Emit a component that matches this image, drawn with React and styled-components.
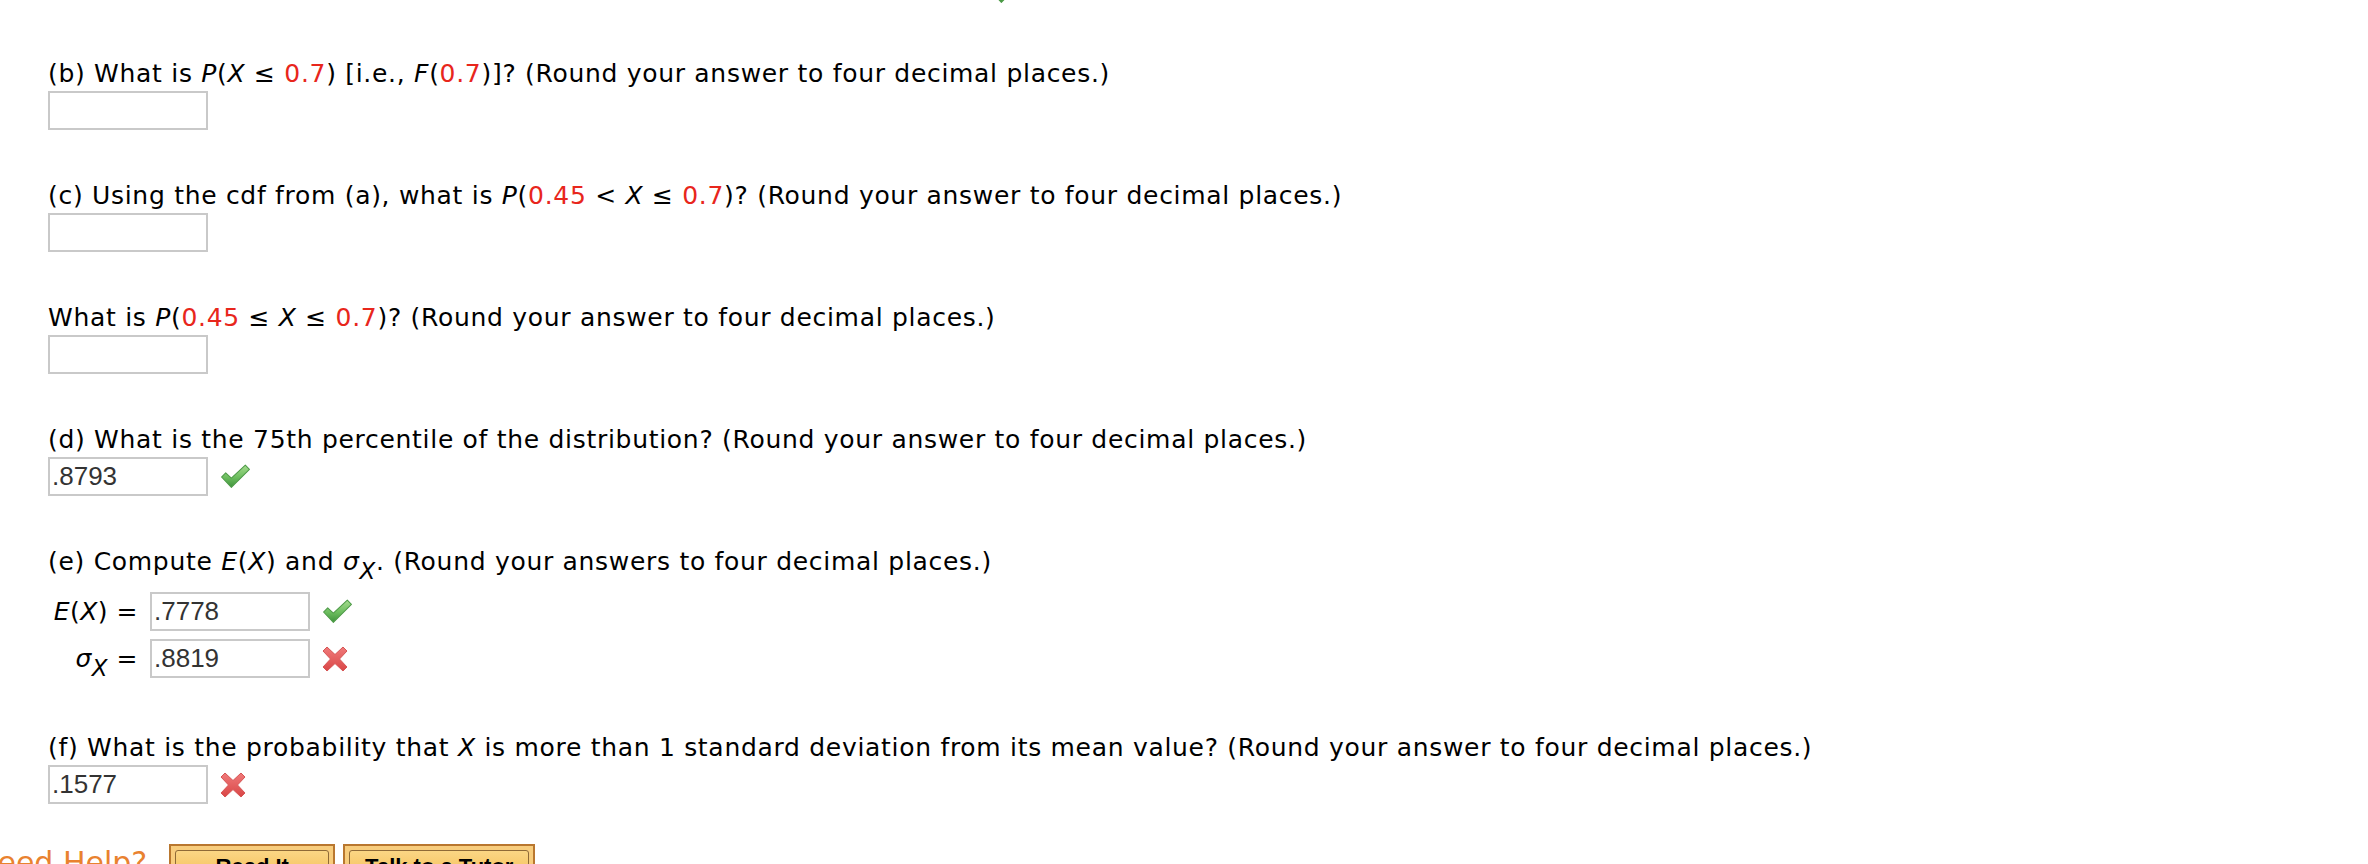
import React from "react";
import styled, { createGlobalStyle } from "styled-components";

const GlobalStyle = createGlobalStyle`
  html, body { margin: 0; padding: 0; background: #ffffff; }
  body { font-family: "DejaVu Sans", Verdana, sans-serif; color: #000; overflow: hidden; }
`;

const Page = styled.div`
  width: 2368px;
  height: 864px;
  overflow: hidden;
  padding-left: 48px;
  box-sizing: border-box;
`;

const PrevStub = styled.div`
  height: 4px;
  overflow: hidden;
  display: flex;
  align-items: flex-end;
  padding-left: 942px;
`;

const Part = styled.section`
  display: flex;
  flex-direction: column;
  gap: 2px;
  margin-top: ${(p) => p.$top}px;
`;

const Question = styled.p`
  margin: 0;
  font-size: 25px;
  letter-spacing: 0.7px;
  line-height: 30px;
  white-space: nowrap;
`;

const Red = styled.span`
  color: #e8261c;
`;

const Sub = styled.sub`
  font-size: 0.92em;
  vertical-align: -0.4em;
  line-height: 0;
`;

const AnswerRow = styled.div`
  display: flex;
  align-items: center;
  gap: 12px;
`;

const Stack = styled.div`
  display: flex;
  flex-direction: column;
  gap: 8px;
  margin-top: 13px;
`;

const Label = styled.span`
  width: 90px;
  text-align: right;
  font-size: 25px;
  letter-spacing: 0.5px;
  line-height: 30px;
  white-space: nowrap;
`;

const Field = styled.input`
  width: 160px;
  height: 39px;
  box-sizing: border-box;
  border: 2px solid #c9c9c9;
  padding: 0 0 0 2px;
  margin: 0;
  font-family: "Liberation Sans", Arial, sans-serif;
  font-size: 26px;
  color: #333;
  background: #fff;
  outline: none;
`;

const HelpRow = styled.div`
  display: flex;
  align-items: flex-start;
  gap: 8px;
  margin-top: 40px;
  margin-left: -73px;
`;

const HelpText = styled.span`
  font-size: 30px;
  line-height: 34px;
  color: #e9822f;
  margin-right: 14px;
  margin-top: 2px;
  white-space: nowrap;
`;

const Button = styled.div`
  width: ${(p) => p.$w}px;
  box-sizing: border-box;
  border: 2px solid #b9772f;
  background: #f8cd7d;
  padding: 4px;
`;

const ButtonFace = styled.div`
  border: 1px solid #8f6a36;
  border-radius: 3px;
  background: linear-gradient(#fbd684, #f2b84c);
  font-family: "Liberation Sans", Arial, sans-serif;
  font-weight: bold;
  font-size: 22px;
  line-height: 26px;
  padding: 3px 0 6px;
  text-align: center;
  color: #000;
`;

const Check = () => (
  <svg width="31" height="25" viewBox="0 0 30 24">
    <defs>
      <linearGradient id="cg" x1="0" y1="0" x2="0" y2="1">
        <stop offset="0" stopColor="#a6dc8f" />
        <stop offset="0.55" stopColor="#6cbd5e" />
        <stop offset="1" stopColor="#3e923b" />
      </linearGradient>
    </defs>
    <path
      d="M1.5 12.5 L5.5 8.5 L11 13.5 L24.5 1 L28.5 5 L11 22.5 Z"
      fill="url(#cg)"
      stroke="#4d9a47"
      strokeWidth="1"
      strokeLinejoin="round"
    />
  </svg>
);

const Cross = () => (
  <svg width="26" height="26" viewBox="0 0 26 26">
    <defs>
      <linearGradient id="xg" x1="0" y1="0" x2="0" y2="1">
        <stop offset="0" stopColor="#f07a7a" />
        <stop offset="1" stopColor="#d94646" />
      </linearGradient>
    </defs>
    <path
      d="M5 1 L13 8.5 L21 1 L25 5 L17.5 13 L25 21 L21 25 L13 17.5 L5 25 L1 21 L8.5 13 L1 5 Z"
      fill="url(#xg)"
      stroke="#d65454"
      strokeWidth="1"
      strokeLinejoin="round"
    />
  </svg>
);

export default function App() {
  return (
    <>
      <GlobalStyle />
      <Page>
        <PrevStub>
          <Check />
        </PrevStub>

        <Part $top={55}>
          <Question>
            (b) What is <i>P</i>(<i>X</i> ≤ <Red>0.7</Red>) [i.e., <i>F</i>(<Red>0.7</Red>)]? (Round your answer to four decimal places.)
          </Question>
          <AnswerRow>
            <Field readOnly defaultValue="" />
          </AnswerRow>
        </Part>

        <Part $top={51}>
          <Question>
            (c) Using the cdf from (a), what is <i>P</i>(<Red>0.45</Red> &lt; <i>X</i> ≤ <Red>0.7</Red>)? (Round your answer to four decimal places.)
          </Question>
          <AnswerRow>
            <Field readOnly defaultValue="" />
          </AnswerRow>
        </Part>

        <Part $top={51}>
          <Question>
            What is <i>P</i>(<Red>0.45</Red> ≤ <i>X</i> ≤ <Red>0.7</Red>)? (Round your answer to four decimal places.)
          </Question>
          <AnswerRow>
            <Field readOnly defaultValue="" />
          </AnswerRow>
        </Part>

        <Part $top={51}>
          <Question>
            (d) What is the 75th percentile of the distribution? (Round your answer to four decimal places.)
          </Question>
          <AnswerRow>
            <Field readOnly defaultValue=".8793" />
            <Check />
          </AnswerRow>
        </Part>

        <Part $top={51}>
          <Question>
            (e) Compute <i>E</i>(<i>X</i>) and <i>σ</i><Sub><i>X</i></Sub>. (Round your answers to four decimal places.)
          </Question>
          <Stack>
            <AnswerRow>
              <Label>
                <i>E</i>(<i>X</i>) =
              </Label>
              <Field readOnly defaultValue=".7778" />
              <Check />
            </AnswerRow>
            <AnswerRow>
              <Label>
                <i>σ</i><Sub><i>X</i></Sub> =
              </Label>
              <Field readOnly defaultValue=".8819" />
              <Cross />
            </AnswerRow>
          </Stack>
        </Part>

        <Part $top={55}>
          <Question>
            (f) What is the probability that <i>X</i> is more than 1 standard deviation from its mean value? (Round your answer to four decimal places.)
          </Question>
          <AnswerRow>
            <Field readOnly defaultValue=".1577" />
            <Cross />
          </AnswerRow>
        </Part>

        <HelpRow>
          <HelpText>Need Help?</HelpText>
          <Button $w={166}>
            <ButtonFace>Read It</ButtonFace>
          </Button>
          <Button $w={192}>
            <ButtonFace>Talk to a Tutor</ButtonFace>
          </Button>
        </HelpRow>
      </Page>
    </>
  );
}
